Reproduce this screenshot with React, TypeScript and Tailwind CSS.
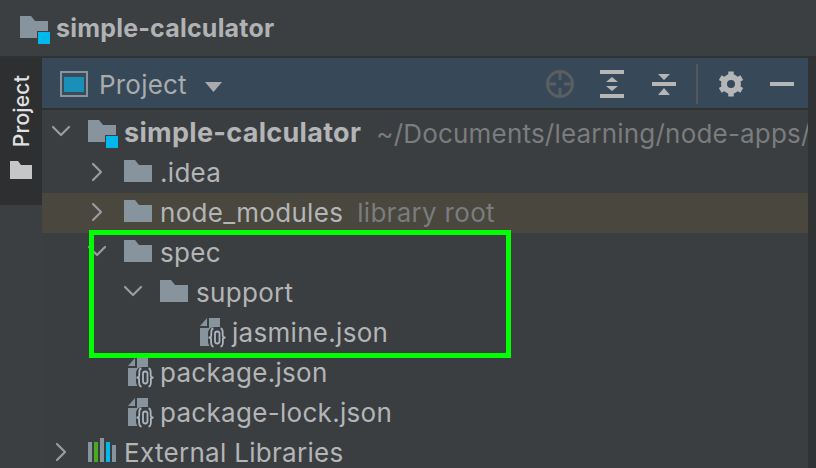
import { ChevronDown, ChevronRight } from "lucide-react";

const Folder = () => (
  <svg width="28" height="22" viewBox="0 0 28 22" className="mb-[4px] shrink-0">
    <path d="M0 0h11l4 5h13v17H0z" fill="#87939d" />
  </svg>
);

const ModuleFolder = () => (
  <svg width="30" height="28" viewBox="0 0 30 28" className="shrink-0">
    <path d="M0 0h11l4 5h13v17H0z" fill="#87939d" />
    <rect x="17" y="15" width="13" height="13" fill="#3c3f41" />
    <rect x="18" y="16" width="12" height="12" fill="#00b8ec" />
  </svg>
);

const JsonFile = () => (
  <svg width="26" height="30" viewBox="0 0 26 30" className="shrink-0">
    <path d="M7 0v8H0z" fill="#87939d" />
    <path d="M9 0h11v28H0V10h9z" fill="#87939d" />
    <rect x="8" y="9" width="18" height="21" rx="6" fill="#3a3d40" />
    <path d="M13.500 10.500c-3.500 0-1.500 6.500-2.500 8s-1.500 1-2.500 1c1 0 2 0 2.500 1s-1 8 2.500 8" fill="none" stroke="#a9b6c0" strokeWidth="1.800" />
    <path d="M20.500 10.500c3.500 0 1.500 6.500 2.500 8s1.500 1 2.500 1c-1 0-2 0-2.500 1s1 8-2.500 8" fill="none" stroke="#a9b6c0" strokeWidth="1.800" />
    <rect x="15" y="13.500" width="4.500" height="12" rx="2.200" fill="none" stroke="#a9b6c0" strokeWidth="1.800" />
  </svg>
);

const Libraries = () => (
  <svg width="28" height="24" viewBox="0 0 28 24" className="mb-[6px] shrink-0">
    <rect x="0" y="4" width="4" height="20" fill="#87939d" />
    <rect x="6" y="4" width="4" height="20" fill="#46ab1e" />
    <rect x="12" y="0" width="4" height="24" fill="#87939d" />
    <rect x="18" y="4" width="4" height="20" fill="#00b8ec" />
    <rect x="24" y="7" width="4" height="17" fill="#87939d" />
  </svg>
);

const Locate = () => (
  <svg width="30" height="30" viewBox="0 0 30 30">
    <circle cx="15" cy="15" r="12.500" fill="none" stroke="#5b5e60" strokeWidth="3" />
    <path d="M15 4v7M15 19v7M4 15h7M19 15h7" stroke="#5b5e60" strokeWidth="3" />
  </svg>
);

const ExpandAll = () => (
  <svg width="26" height="30" viewBox="0 0 26 30" fill="#b4b6b8">
    <rect x="1" y="1" width="24" height="4" />
    <rect x="1" y="25" width="24" height="4" />
    <path d="M13 8l6 5H7zM13 22l6-5H7z" />
  </svg>
);

const CollapseAll = () => (
  <svg width="26" height="26" viewBox="0 0 26 26" fill="#b4b6b8">
    <rect x="1" y="11" width="24" height="4" />
    <path d="M13 9L7 3h12zM13 17l6 7H7z" />
  </svg>
);

const Gear = () => (
  <svg width="28" height="28" viewBox="0 0 28 28">
    <circle cx="14" cy="14" r="7" fill="none" stroke="#b4b6b8" strokeWidth="6" />
    <path
      d="M14 1.500v5M14 21.500v5M3.200 7.700l4.300 2.500M20.500 17.800l4.300 2.500M3.200 20.300l4.300-2.500M20.500 10.200l4.300-2.500"
      stroke="#b4b6b8"
      strokeWidth="5.500"
    />
  </svg>
);

const Down = () => (
  <ChevronDown size={32} strokeWidth={1.6} className="mb-[5px] shrink-0 text-[#9a9c9e]" />
);

const Right = () => (
  <ChevronRight size={32} strokeWidth={1.6} className="mb-[3px] shrink-0 text-[#9a9c9e]" />
);

const Label = ({ text }: { text: string }) => <span className="mb-[2px] ml-[8px]">{text}</span>;

const SINK = "text-[#b3b5b7]";

const App = () => {
  return (
    <div className="relative flex h-[468px] w-[816px] flex-col overflow-hidden bg-[#3b3e41] font-['Inter',sans-serif] text-[26px] tracking-[0.3px]">
      <div className="flex h-[56px] shrink-0 items-center gap-[6px] bg-[#3c3f41] pl-[20px] pt-[2px]">
        <div className="mt-[2px]"><ModuleFolder /></div>
        <span className="text-[25px] font-bold tracking-[0.2px] text-[#b0b2b4]">simple-calculator</span>
      </div>
      <div className="flex min-h-0 flex-1 border-t-2 border-[#2f3133]">
        <div className="w-[42px] shrink-0 bg-[#3c3f41]">
          <div className="flex h-[147px] flex-col items-center gap-[14px] bg-[#2d2f31] pt-[17px]">
            <span className="rotate-180 text-[21px] font-medium leading-none tracking-[0.2px] text-[#e1e2e3] [writing-mode:vertical-rl]">
              Project
            </span>
            <svg width="22" height="18" viewBox="0 0 22 18">
              <path d="M0 0h8l3 4h11v14H0z" fill="#c4c6c8" />
            </svg>
          </div>
        </div>
        <div className="flex min-w-0 flex-1 flex-col">
          <div className="flex h-[52px] shrink-0 items-center border-b-2 border-[#2f3133] bg-[#374859] pl-[18px] pt-[2px]">
            <div className="flex h-[26px] w-[28px] items-center justify-center border-[2px] border-[#87939d] bg-[#3b4b5a]">
              <div className="h-[15px] w-[20px] bg-[#1a8fb8]" />
            </div>
            <span className="ml-[11px] text-[#a9abad] tracking-[0.2px]">Project</span>
            <svg width="18" height="10" viewBox="0 0 18 10" className="ml-[18px] mt-[6px]">
              <path d="M0 0h17L8.500 10z" fill="#a9abad" />
            </svg>
            <div className="ml-auto flex items-center">
              <Locate />
              <div className="ml-[24px]"><ExpandAll /></div>
              <div className="ml-[26px]"><CollapseAll /></div>
              <div className="ml-[19px] h-[40px] w-[2px] bg-[#55585a]" />
              <div className="ml-[19px]"><Gear /></div>
              <div className="ml-[25px] mr-[14px] h-[4px] w-[24px] bg-[#b4b6b8]" />
            </div>
          </div>
          <div className="flex flex-1 flex-col pt-[3px]">
            <div className={`flex h-[40px] items-center overflow-hidden whitespace-nowrap pl-[3px] ${SINK}`}>
              <ChevronDown size={32} strokeWidth={1.6} className="mb-[4px] shrink-0 text-[#9a9c9e]" />
              <div className="ml-[11px] mt-[2px] shrink-0"><ModuleFolder /></div>
              <span className="ml-[6px] text-[27px] font-bold">simple-calculator</span>
              <span className="ml-[15px] tracking-[0.2px] text-[#7a7c7e]">~/Documents/learning/node-apps/</span>
            </div>
            <div className={`flex h-[40px] items-center pl-[39px] ${SINK}`}>
              <Right />
              <div className="ml-[11px]"><Folder /></div>
              <Label text=".idea" />
            </div>
            <div className={`flex h-[40px] items-center bg-[#4a473e] pl-[39px] ${SINK}`}>
              <Right />
              <div className="ml-[11px]"><Folder /></div>
              <Label text="node_modules" />
              <span className="mb-[2px] ml-[14px] text-[#7a7c7e]">library root</span>
            </div>
            <div className={`flex h-[40px] items-center pl-[39px] ${SINK}`}>
              <Down />
              <div className="ml-[11px]"><Folder /></div>
              <Label text="spec" />
            </div>
            <div className={`flex h-[40px] items-center pl-[75px] ${SINK}`}>
              <Down />
              <div className="ml-[11px]"><Folder /></div>
              <Label text="support" />
            </div>
            <div className={`flex h-[40px] items-center pl-[158px] ${SINK}`}>
              <JsonFile />
              <span className="mb-[2px] ml-[6px]">jasmine.json</span>
            </div>
            <div className={`flex h-[40px] items-center pl-[86px] ${SINK}`}>
              <JsonFile />
              <span className="mb-[2px] ml-[6px]">package.json</span>
            </div>
            <div className={`flex h-[40px] items-center pl-[86px] ${SINK}`}>
              <JsonFile />
              <span className="mb-[2px] ml-[6px]">package-lock.json</span>
            </div>
            <div className={`flex h-[40px] items-center pl-[3px] ${SINK}`}>
              <Right />
              <div className="ml-[11px]"><Libraries /></div>
              <Label text="External Libraries" />
            </div>
          </div>
        </div>
        <div className="w-[8px] shrink-0 bg-[#303234]" />
      </div>
      <div className="absolute left-[89px] top-[230px] h-[128px] w-[422px] border-[5px] border-[#00ff00]" />
    </div>
  );
};

export default App;
